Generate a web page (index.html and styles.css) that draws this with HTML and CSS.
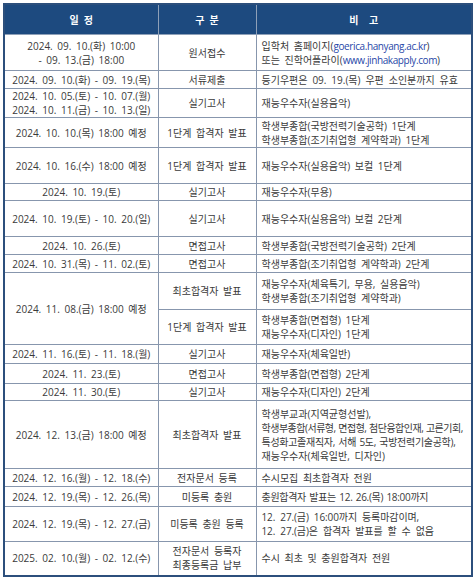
FILE: index.html
```html
<!DOCTYPE html>
<html lang="ko">
<head>
<meta charset="utf-8">
<link rel="stylesheet" href="styles.css">
</head>
<body>
<table class="sched">
  <colgroup><col class="c1"><col class="c2"><col class="c3"></colgroup>
  <thead>
    <tr class="head"><th>일&nbsp;&nbsp;정</th><th>구&nbsp;&nbsp;분</th><th>비&nbsp;&nbsp;&nbsp;&nbsp;고</th></tr>
  </thead>
  <tbody>
    <tr class="h36"><td>2024. 09. 10.(화) 10:00<br>- 09. 13.(금) 18:00</td><td>원서접수</td><td class="note">입학처 홈페이지(<span class="link">goerica.hanyang.ac.kr</span>)<br>또는 진학어플라이(<span class="link">www.jinhakapply.com</span>)</td></tr>
    <tr class="h18"><td>2024. 09. 10.(화) - 09. 19.(목)</td><td>서류제출</td><td class="note wide">등기우편은 09. 19.(목) 우편 소인분까지 유효</td></tr>
    <tr class="h29"><td>2024. 10. 05.(토) - 10. 07.(월)<br>2024. 10. 11.(금) - 10. 13.(일)</td><td>실기고사</td><td class="note">재능우수자(실용음악)</td></tr>
    <tr class="h30"><td>2024. 10. 10.(목) 18:00 예정</td><td>1단계 합격자 발표</td><td class="note">학생부종합(국방전력기술공학) 1단계<br>학생부종합(조기취업형 계약학과) 1단계</td></tr>
    <tr class="h36"><td>2024. 10. 16.(수) 18:00 예정</td><td>1단계 합격자 발표</td><td class="note">재능우수자(실용음악) 보컬 1단계</td></tr>
    <tr class="h17"><td>2024. 10. 19.(토)</td><td>실기고사</td><td class="note">재능우수자(무용)</td></tr>
    <tr class="h36"><td>2024. 10. 19.(토) - 10. 20.(일)</td><td>실기고사</td><td class="note">재능우수자(실용음악) 보컬 2단계</td></tr>
    <tr class="h18"><td>2024. 10. 26.(토)</td><td>면접고사</td><td class="note">학생부종합(국방전력기술공학) 2단계</td></tr>
    <tr class="h18"><td>2024. 10. 31.(목) - 11. 02.(토)</td><td>면접고사</td><td class="note">학생부종합(조기취업형 계약학과) 2단계</td></tr>
    <tr class="h37"><td rowspan="2">2024. 11. 08.(금) 18:00 예정</td><td>최초합격자 발표</td><td class="note">재능우수자(체육특기, 무용, 실용음악)<br>학생부종합(조기취업형 계약학과)</td></tr>
    <tr class="h35"><td>1단계 합격자 발표</td><td class="note">학생부종합(면접형) 1단계<br>재능우수자(디자인) 1단계</td></tr>
    <tr class="h19"><td>2024. 11. 16.(토) - 11. 18.(월)</td><td>실기고사</td><td class="note">재능우수자(체육일반)</td></tr>
    <tr class="h20"><td>2024. 11. 23.(토)</td><td>면접고사</td><td class="note">학생부종합(면접형) 2단계</td></tr>
    <tr class="h17"><td>2024. 11. 30.(토)</td><td>실기고사</td><td class="note">재능우수자(디자인) 2단계</td></tr>
    <tr class="h68"><td>2024. 12. 13.(금) 18:00 예정</td><td>최초합격자 발표</td><td class="note">학생부교과(지역균형선발),<br><span class="tight">학생부종합(서류형, 면접형, 첨단융합인재, 고른기회,</span><br><span class="tight2">특성화고졸재직자, 서해 5도, 국방전력기술공학),</span><br>재능우수자(체육일반, 디자인)</td></tr>
    <tr class="h18"><td>2024. 12. 16.(월) - 12. 18.(수)</td><td>전자문서 등록</td><td class="note">수시모집 최초합격자 전원</td></tr>
    <tr class="h20"><td>2024. 12. 19.(목) - 12. 26.(목)</td><td>미등록 충원</td><td class="note narrow">충원합격자 발표는 12. 26.(목) 18:00까지</td></tr>
    <tr class="h35"><td>2024. 12. 19.(목) - 12. 27.(금)</td><td>미등록 충원 등록</td><td class="note narrow2">12. 27.(금) 16:00까지 등록마감이며,<br>12. 27.(금)은 합격자 발표를 할 수 없음</td></tr>
    <tr class="h34"><td>2025. 02. 10.(월) - 02. 12.(수)</td><td>전자문서 등록자<br>최종등록금 납부</td><td class="note">수시 최초 및 충원합격자 전원</td></tr>
  </tbody>
</table>
</body>
</html>
```

FILE: styles.css
```css
html, body {
  margin: 0;
  padding: 0;
  background: #ffffff;
}
body {
  padding: 3px 0 0 3px;
}
.sched {
  border-collapse: collapse;
  width: 468px;
  table-layout: fixed;
  font-family: "Open Sans", "Noto Sans CJK KR", sans-serif;
  font-size: 10px;
  line-height: 14px;
  color: #3a3a3a;
  border: 2px solid #2c4f7c;
}
.c1 { width: 154px; }
.c2 { width: 98px; }
.c3 { width: 216px; }
.sched th {
  background: #1d4a7f;
  color: #ffffff;
  font-weight: bold;
  font-size: 10px;
  height: 29px;
  padding: 0;
  border: 1px solid #8ea0b8;
  border-top: 2px solid #2c4f7c;
}
.sched td {
  border: 1px solid #8796ad;
  padding: 0 2px;
  text-align: center;
  vertical-align: middle;
  white-space: nowrap;
  overflow: hidden;
  word-spacing: 2px;
}
.sched td.note {
  text-align: left;
  padding-left: 5px;
}
.sched td.wide { word-spacing: 2.3px; }
.sched td.narrow { letter-spacing: -0.3px; word-spacing: 1px; }
.sched td.narrow2 { letter-spacing: -0.1px; word-spacing: 2.5px; }
.tight { letter-spacing: -0.5px; word-spacing: 0.5px; }
.tight2 { letter-spacing: -0.3px; word-spacing: 1px; }
.link { color: #2847a8; letter-spacing: -0.4px; }
.h17 { height: 17px; }
.h18 { height: 18px; }
.h19 { height: 19px; }
.h20 { height: 20px; }
.h29 { height: 29px; }
.h30 { height: 30px; }
.h34 { height: 34px; }
.h35 { height: 35px; }
.h36 { height: 36px; }
.h37 { height: 37px; }
.h68 { height: 68px; }
```
